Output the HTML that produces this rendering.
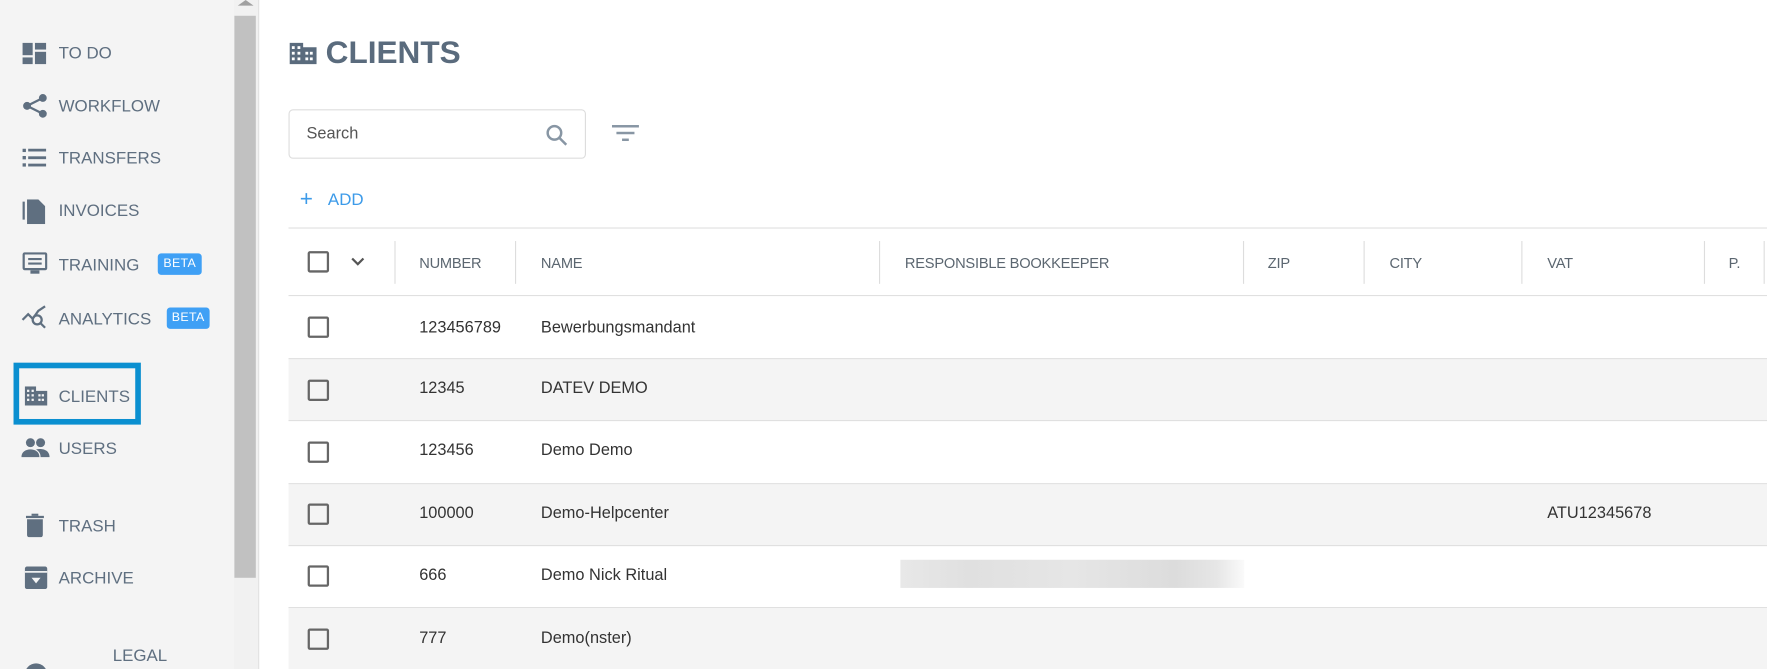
<!DOCTYPE html>
<html><head><meta charset="utf-8"><style>
html,body{margin:0;padding:0;width:1767px;height:669px;overflow:hidden;background:#fff;font-family:"Liberation Sans",sans-serif}
#w{position:absolute;left:0;top:0;width:1568px;height:594px;transform:scale(1.12691,1.1263);transform-origin:0 0;overflow:hidden}
.a{position:absolute}
.side{left:0;top:0;width:207px;height:594px;background:#f4f4f4}
.sb{left:207px;top:0;width:22px;height:594px;background:#f1f1f1;border-right:1px solid #e2e2e2}
.thumb{left:208px;top:14px;width:19px;height:499px;background:#c1c1c1}
.it{position:absolute;left:52px;font-size:15px;color:#5f6f80;line-height:20px;margin-top:1px}
.ic{position:absolute;left:20px}
.beta{position:absolute;background:#3fa0f5;color:#fff;font-size:11px;border-radius:3px;height:19px;line-height:19px;text-align:center;letter-spacing:.3px}
.hd{position:absolute;font-size:13px;color:#5b6670;top:226px;letter-spacing:-.2px}
.sep{position:absolute;top:214px;width:1px;height:38px;background:#ddd}
.row{position:absolute;left:256px;width:1312px;border-bottom:1px solid #ddd}
.cb{position:absolute;left:17px;width:15px;height:15px;border:2px solid #666;border-radius:2px}
.ct{position:absolute;font-size:14.5px;color:#333;margin-top:1px}
</style></head><body><div id="w">
<div class="a side"></div>
<div class="a sb"></div>
<div class="a thumb"></div>
<div class="a" style="left:211px;top:0;width:0;height:0;border-left:7px solid transparent;border-right:7px solid transparent;border-bottom:5px solid #a0a0a0"></div>

<svg class="ic" style="top:38px" width="21" height="19" viewBox="0 0 21 19" fill="#5f6f80"><rect x="0" y="0" width="9" height="11"/><rect x="11" y="0" width="10" height="6"/><rect x="0" y="13" width="9" height="6"/><rect x="11" y="8" width="10" height="11"/></svg>
<div class="it" style="top:37px">TO DO</div>
<svg class="ic" style="top:83px" width="22" height="22" viewBox="0 0 22 22" fill="#5f6f80"><circle cx="18" cy="4" r="3.5"/><circle cx="4" cy="11" r="3.5"/><circle cx="18" cy="18" r="3.5"/><path d="M4 11L18 4M4 11L18 18" stroke="#5f6f80" stroke-width="2"/></svg>
<div class="it" style="top:84px">WORKFLOW</div>
<svg class="ic" style="top:132px" width="21" height="16" viewBox="0 0 21 16" fill="#5f6f80"><rect x="0" y="0" width="3" height="3"/><rect x="5" y="0" width="16" height="2.5"/><rect x="0" y="6.5" width="3" height="3"/><rect x="5" y="6.8" width="16" height="2.5"/><rect x="0" y="13" width="3" height="3"/><rect x="5" y="13.3" width="16" height="2.5"/></svg>
<div class="it" style="top:130px">TRANSFERS</div>
<svg class="ic" style="top:177px" width="21" height="22" viewBox="0 0 21 22" fill="#5f6f80"><path d="M0 2h2v16h-2z"/><path d="M4 0h10l6 6v16h-16z"/></svg>
<div class="it" style="top:177px">INVOICES</div>
<svg class="ic" style="top:224px" width="22" height="20" viewBox="0 0 22 20"><rect x="1" y="1" width="20" height="14" rx="1" fill="none" stroke="#5f6f80" stroke-width="2"/><rect x="7" y="16" width="8" height="3" fill="#5f6f80"/><path d="M5 6h12M5 10h12" stroke="#5f6f80" stroke-width="1.8"/></svg>
<div class="it" style="top:225px">TRAINING</div>
<div class="beta" style="left:140px;top:225px;width:39px">BETA</div>
<svg class="ic" style="top:271px;left:19px" width="24" height="22" viewBox="0 0 24 22" fill="none" stroke="#5f6f80" stroke-width="2"><path d="M1 13l5-5 4 4 5-7 6-4"/><circle cx="14" cy="13" r="4"/><path d="M17 16l4 4"/></svg>
<div class="it" style="top:273px">ANALYTICS</div>
<div class="beta" style="left:148px;top:273px;width:38px">BETA</div>

<div class="a" style="left:12px;top:322px;width:103px;height:45px;border:5px solid #0a8fd0"></div>
<svg class="ic" style="top:343px;left:22px" width="20" height="17" viewBox="0 0 20 17" fill="#5f6f80"><path d="M0 0h10v4h10v13h-20z"/><g fill="#f4f4f4"><rect x="2" y="3" width="2" height="2"/><rect x="6" y="3" width="2" height="2"/><rect x="2" y="7" width="2" height="2"/><rect x="6" y="7" width="2" height="2"/><rect x="2" y="11" width="2" height="2"/><rect x="6" y="11" width="2" height="2"/><rect x="12" y="7" width="2" height="2"/><rect x="15" y="7" width="2" height="2"/><rect x="12" y="11" width="2" height="2"/><rect x="15" y="11" width="2" height="2"/></g></svg>
<div class="it" style="top:342px">CLIENTS</div>
<svg class="ic" style="top:389px;left:19px" width="25" height="17" viewBox="0 0 25 17" fill="#5f6f80"><circle cx="8" cy="4" r="4"/><circle cx="17" cy="4" r="4"/><path d="M0 17c0-5 4-7 8-7s8 2 8 7z"/><path d="M13 10c5-1 12 0 12 7h-8c0-3-1-5-4-7z"/></svg>
<div class="it" style="top:388px">USERS</div>
<svg class="ic" style="top:456px;left:23px" width="16" height="21" viewBox="0 0 16 21" fill="#5f6f80"><rect x="0" y="2" width="16" height="2"/><rect x="5" y="0" width="6" height="2"/><path d="M1 5h14v14a2 2 0 0 1-2 2h-10a2 2 0 0 1-2-2z"/></svg>
<div class="it" style="top:457px">TRASH</div>
<svg class="ic" style="top:503px;left:22px" width="20" height="20" viewBox="0 0 20 20"><rect x="0" y="0" width="20" height="20" rx="2" fill="#5f6f80"/><rect x="0" y="4" width="20" height="1.5" fill="#f4f4f4"/><path d="M6 10h8l-4 5z" fill="#f4f4f4"/></svg>
<div class="it" style="top:503px">ARCHIVE</div>
<div class="it" style="top:572px;left:100px">LEGAL</div>
<svg class="ic" style="top:588px;left:21px" width="22" height="22" viewBox="0 0 22 22"><circle cx="11" cy="11" r="10" fill="#5f6f80"/></svg>

<svg class="a" style="left:257px;top:38px" width="24" height="19" viewBox="0 0 24 19" fill="#5a6b7d"><path d="M0 0h12v4h12v15h-24z"/><g fill="#fff"><rect x="2" y="3" width="2.5" height="2.5"/><rect x="7" y="3" width="2.5" height="2.5"/><rect x="2" y="8" width="2.5" height="2.5"/><rect x="7" y="8" width="2.5" height="2.5"/><rect x="2" y="13" width="2.5" height="2.5"/><rect x="7" y="13" width="2.5" height="2.5"/><rect x="14" y="8" width="2.5" height="2.5"/><rect x="18" y="8" width="2.5" height="2.5"/><rect x="14" y="13" width="2.5" height="2.5"/><rect x="18" y="13" width="2.5" height="2.5"/></g></svg>
<div class="a" style="left:289px;top:30px;font-size:28px;font-weight:bold;color:#5a6b7d;line-height:34px">CLIENTS</div>

<div class="a" style="left:256px;top:97px;width:262px;height:42px;border:1px solid #ddd;border-radius:4px"></div>
<div class="a" style="left:272px;top:111px;font-size:14.5px;color:#555">Search</div>
<svg class="a" style="left:484px;top:110px" width="20" height="20" viewBox="0 0 20 20" fill="none" stroke="#8896a4" stroke-width="2.2"><circle cx="8" cy="8" r="6"/><path d="M12.5 12.5l6 6"/></svg>
<svg class="a" style="left:543px;top:111px" width="24" height="16" viewBox="0 0 24 16" fill="#8896a4"><rect x="0" y="0" width="24" height="2.2"/><rect x="4" y="6" width="16" height="2.2"/><rect x="9" y="12" width="6" height="2.2"/></svg>
<div class="a" style="left:266px;top:167px;font-size:20px;color:#3d9be9;line-height:20px">+</div>
<div class="a" style="left:291px;top:169px;font-size:15px;color:#3d9be9">ADD</div>

<div class="a" style="left:256px;top:202px;width:1312px;height:1px;background:#ddd"></div>
<div class="row" style="top:203px;height:59px;background:#fff"><div class="cb" style="top:20px"></div></div>
<svg class="a" style="left:311px;top:228px" width="13" height="9" viewBox="0 0 13 9" fill="none" stroke="#555" stroke-width="2"><path d="M1.5 1.5l5 5 5-5"/></svg>
<div class="sep" style="left:350px"></div><div class="sep" style="left:457px"></div><div class="sep" style="left:780px"></div><div class="sep" style="left:1103px"></div><div class="sep" style="left:1210px"></div><div class="sep" style="left:1350px"></div><div class="sep" style="left:1512px"></div><div class="sep" style="left:1565px"></div>
<div class="hd" style="left:372px">NUMBER</div>
<div class="hd" style="left:480px">NAME</div>
<div class="hd" style="left:803px">RESPONSIBLE BOOKKEEPER</div>
<div class="hd" style="left:1125px">ZIP</div>
<div class="hd" style="left:1233px">CITY</div>
<div class="hd" style="left:1373px">VAT</div>
<div class="hd" style="left:1534px">P.</div>

<div class="row" style="top:263px;height:55px;background:#fff"><div class="cb" style="top:18px"></div></div>
<div class="row" style="top:319px;height:54px;background:#f4f4f4"><div class="cb" style="top:18px"></div></div>
<div class="row" style="top:374px;height:55px;background:#fff"><div class="cb" style="top:18px"></div></div>
<div class="row" style="top:430px;height:54px;background:#f4f4f4"><div class="cb" style="top:17px"></div></div>
<div class="row" style="top:485px;height:54px;background:#fff"><div class="cb" style="top:17px"></div></div>
<div class="row" style="top:540px;height:56px;background:#f4f4f4;border:none"><div class="cb" style="top:18px"></div></div>

<div class="ct" style="left:372px;top:282px">123456789</div><div class="ct" style="left:480px;top:282px">Bewerbungsmandant</div>
<div class="ct" style="left:372px;top:336px">12345</div><div class="ct" style="left:480px;top:336px">DATEV DEMO</div>
<div class="ct" style="left:372px;top:391px">123456</div><div class="ct" style="left:480px;top:391px">Demo Demo</div>
<div class="ct" style="left:372px;top:447px">100000</div><div class="ct" style="left:480px;top:447px">Demo-Helpcenter</div><div class="ct" style="left:1373px;top:447px">ATU12345678</div>
<div class="ct" style="left:372px;top:502px">666</div><div class="ct" style="left:480px;top:502px">Demo Nick Ritual</div>
<div class="a" style="left:799px;top:497px;width:305px;height:25px;background:linear-gradient(90deg,#e8e8e8,#e0e0e0 20%,#e6e6e6 50%,#dcdcdc 80%,#e6e6e6 92%,#fafafa)"></div>
<div class="ct" style="left:372px;top:558px">777</div><div class="ct" style="left:480px;top:558px">Demo(nster)</div>
</div></body></html>
